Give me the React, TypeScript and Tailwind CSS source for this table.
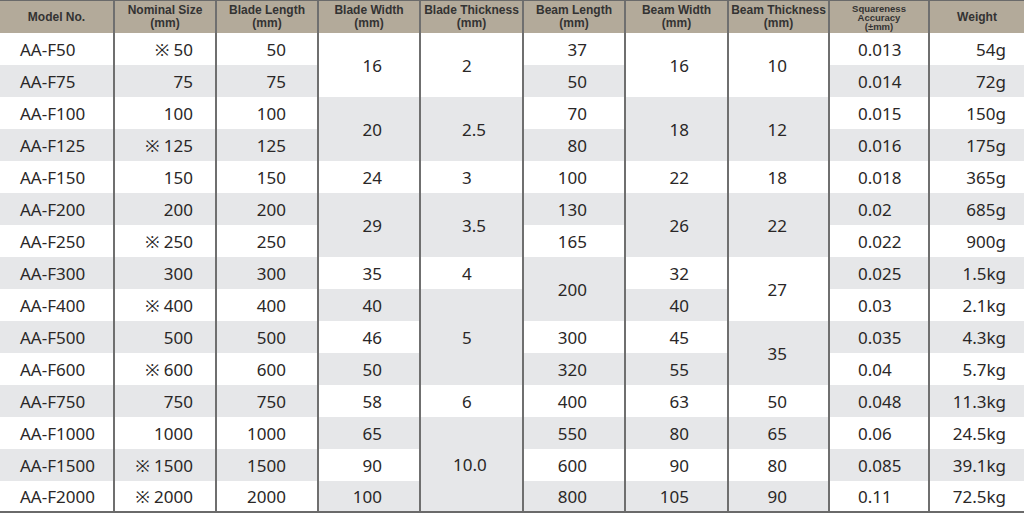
type Cell = { v: string; span?: number; cls?: string }

interface Column {
  header: string[]
  small?: boolean
  align: string
  cells: Cell[]
}

const single = (vals: string[]): Cell[] => vals.map((v) => ({ v }))

const columns: Column[] = [
  {
    header: ['Model No.'],
    align: 'justify-start pl-[20px]',
    cells: single([
      'AA-F50', 'AA-F75', 'AA-F100', 'AA-F125', 'AA-F150', 'AA-F200', 'AA-F250', 'AA-F300',
      'AA-F400', 'AA-F500', 'AA-F600', 'AA-F750', 'AA-F1000', 'AA-F1500', 'AA-F2000',
    ]),
  },
  {
    header: ['Nominal Size', '(mm)'],
    align: 'justify-end pr-[22px]',
    cells: single([
      '※ 50', '75', '100', '※ 125', '150', '200', '※ 250', '300',
      '※ 400', '500', '※ 600', '750', '1000', '※ 1500', '※ 2000',
    ]),
  },
  {
    header: ['Blade Length', '(mm)'],
    align: 'justify-end pr-[31px]',
    cells: single([
      '50', '75', '100', '125', '150', '200', '250', '300',
      '400', '500', '600', '750', '1000', '1500', '2000',
    ]),
  },
  {
    header: ['Blade Width', '(mm)'],
    align: 'justify-end pr-[37px]',
    cells: [
      { v: '16', span: 2 }, { v: '20', span: 2 }, { v: '24' }, { v: '29', span: 2 },
      { v: '35' }, { v: '40' }, { v: '46' }, { v: '50' }, { v: '58' }, { v: '65' }, { v: '90' }, { v: '100' },
    ],
  },
  {
    header: ['Blade Thickness', '(mm)'],
    align: 'justify-start pl-[41px]',
    cells: [
      { v: '2', span: 2 }, { v: '2.5', span: 2 }, { v: '3' }, { v: '3.5', span: 2 },
      { v: '4' }, { v: '5', span: 3 }, { v: '6' }, { v: '10.0', span: 3, cls: '-ml-[9px]' },
    ],
  },
  {
    header: ['Beam Length', '(mm)'],
    align: 'justify-end pr-[37px]',
    cells: [
      { v: '37' }, { v: '50' }, { v: '70' }, { v: '80' }, { v: '100' }, { v: '130' }, { v: '165' },
      { v: '200', span: 2 }, { v: '300' }, { v: '320' }, { v: '400' }, { v: '550' }, { v: '600' }, { v: '800' },
    ],
  },
  {
    header: ['Beam Width', '(mm)'],
    align: 'justify-end pr-[38px]',
    cells: [
      { v: '16', span: 2 }, { v: '18', span: 2 }, { v: '22' }, { v: '26', span: 2 },
      { v: '32' }, { v: '40' }, { v: '45' }, { v: '55' }, { v: '63' }, { v: '80' }, { v: '90' }, { v: '105' },
    ],
  },
  {
    header: ['Beam Thickness', '(mm)'],
    align: 'justify-end pr-[41px]',
    cells: [
      { v: '10', span: 2 }, { v: '12', span: 2 }, { v: '18' }, { v: '22', span: 2 },
      { v: '27', span: 2 }, { v: '35', span: 2 }, { v: '50' }, { v: '65' }, { v: '80' }, { v: '90' },
    ],
  },
  {
    header: ['Squareness', 'Accuracy', '(±mm)'],
    small: true,
    align: 'justify-start pl-[28px]',
    cells: single([
      '0.013', '0.014', '0.015', '0.016', '0.018', '0.02', '0.022', '0.025',
      '0.03', '0.035', '0.04', '0.048', '0.06', '0.085', '0.11',
    ]),
  },
  {
    header: ['Weight'],
    align: 'justify-end pr-[18px]',
    cells: single([
      '54g', '72g', '150g', '175g', '365g', '685g', '900g', '1.5kg',
      '2.1kg', '4.3kg', '5.7kg', '11.3kg', '24.5kg', '39.1kg', '72.5kg',
    ]),
  },
]

const spanClass: Record<number, string> = {
  1: '',
  2: 'row-span-2',
  3: 'row-span-3',
}

export default function App() {
  return (
    <div className="w-[1024px] h-[513px] overflow-hidden bg-white">
      <div
        className="grid grid-flow-col grid-cols-[113px_102px_102px_102px_103px_102px_103px_101px_100px_96px] grid-rows-[32px_repeat(14,32px)_30px] border-t border-b-2 border-[#6a6a6a] text-[#2a2727]"
        style={{ fontFamily: '"Noto Sans", "Noto Sans CJK JP", sans-serif' }}
      >
        {columns.map((col, ci) => {
          const line = ci === 0 ? '' : 'border-l-2 border-[#6f6f6f]'
          return [
            <div
              key={`h-${ci}`}
              className={`flex flex-col items-center justify-center bg-[#b3aa9a] font-bold text-[#333] ${line} ${
                col.small ? 'text-[9.5px] leading-[9px]' : 'text-[12px] leading-[13px]'
              }`}
              style={{ fontFamily: '"Liberation Sans", Arial, sans-serif' }}
            >
              {col.header.map((h) => (
                <span key={h} className="whitespace-nowrap">{h}</span>
              ))}
            </div>,
            ...col.cells.map((cell, i) => (
              <div
                key={`${ci}-${i}`}
                className={`flex items-center pt-[1px] text-[17px] ${col.align} ${line} ${spanClass[cell.span ?? 1]} ${
                  i % 2 === 0 ? 'bg-white' : 'bg-[#e6e7e9]'
                }`}
              >
                <span className={`whitespace-nowrap ${cell.cls ?? ''}`}>{cell.v}</span>
              </div>
            )),
          ]
        })}
      </div>
    </div>
  )
}
